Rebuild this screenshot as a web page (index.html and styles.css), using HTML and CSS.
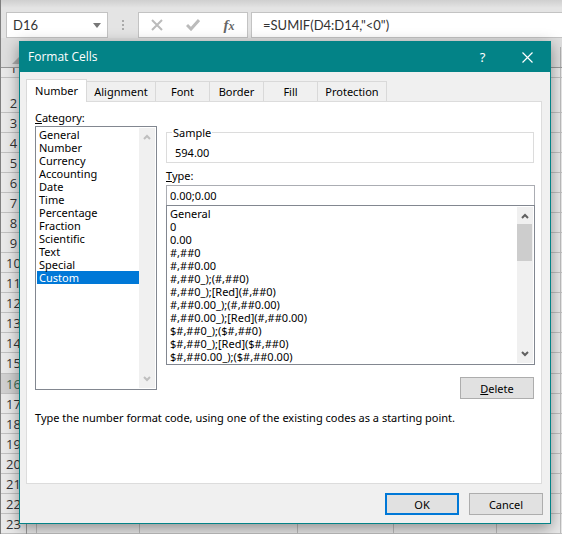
FILE: index.html
```html
<!DOCTYPE html>
<html lang="en">
<head>
<meta charset="utf-8">
<title>Format Cells</title>
<link rel="stylesheet" href="styles.css">
</head>
<body>
<main class="app">
  <header class="formula-bar">
    <div class="box name-box">
      <input class="box-input" aria-label="Name box" value="D16">
      <svg class="caret" viewBox="0 0 8 5" aria-hidden="true"><path d="M0 0h8L4 5z"/></svg>
    </div>
    <svg class="grip" viewBox="0 0 3 12" aria-hidden="true"><path d="M0 0h2v2H0zM0 4h2v2H0zM0 8h2v2H0z"/></svg>
    <div class="box tools">
      <button class="tool" aria-label="Cancel entry"><svg viewBox="0 0 14 12"><path class="tool-line" d="M2 1l10 10M12 1L2 11"/></svg></button>
      <button class="tool" aria-label="Enter"><svg viewBox="0 0 14 12"><path class="tool-line tick" d="M1 6l4 4 8-9"/></svg></button>
      <button class="tool fx" aria-label="Insert function">f<span class="fx-x">x</span></button>
    </div>
    <div class="box formula"><input class="box-input" aria-label="Formula" value="=SUMIF(D4:D14,&quot;&lt;0&quot;)"></div>
  </header>

  <div class="sheet">
    <div class="col-heads">
      <span class="corner"><svg viewBox="0 0 12 12" aria-hidden="true"><path d="M12 0v12H0z"/></svg></span>
      <span class="col-edge"></span>
    </div>
    <div class="sheet-body">
      <ol class="rows">
        <li class="row first"><span class="num">1</span></li>
        <li class="row second"><span class="num">2</span></li>
        <li class="row"><span class="num">3</span></li>
        <li class="row"><span class="num">4</span></li>
        <li class="row"><span class="num">5</span></li>
        <li class="row"><span class="num">6</span></li>
        <li class="row"><span class="num">7</span></li>
        <li class="row"><span class="num">8</span></li>
        <li class="row"><span class="num">9</span></li>
        <li class="row"><span class="num">10</span></li>
        <li class="row"><span class="num">11</span></li>
        <li class="row"><span class="num">12</span></li>
        <li class="row"><span class="num">13</span></li>
        <li class="row"><span class="num">14</span></li>
        <li class="row tall"><span class="num">15</span></li>
        <li class="row current"><span class="num">16</span></li>
        <li class="row"><span class="num">17</span></li>
        <li class="row"><span class="num">18</span></li>
        <li class="row"><span class="num">19</span></li>
        <li class="row"><span class="num">20</span></li>
        <li class="row"><span class="num">21</span></li>
        <li class="row"><span class="num">22</span></li>
        <li class="row"><span class="num">23</span></li>
      </ol>
      <div class="columns"><i></i><i></i><i></i><i></i><i></i><i></i><i></i></div>
    </div>
  </div>

  <section class="dialog" role="dialog" aria-labelledby="dialog-title">
    <div class="title-bar">
      <h1 class="title" id="dialog-title">Format Cells</h1>
      <button class="title-button" aria-label="Help">?</button>
      <button class="title-button" aria-label="Close"><svg viewBox="0 0 11 11"><path d="M.5.5l10 10M10.500.5l-10 10"/></svg></button>
    </div>
    <div class="dialog-body">
      <div class="tabs" role="tablist">
        <button class="tab active" role="tab" aria-selected="true">Number</button>
        <button class="tab wide" role="tab">Alignment</button>
        <button class="tab" role="tab">Font</button>
        <button class="tab" role="tab">Border</button>
        <button class="tab" role="tab">Fill</button>
        <button class="tab wide" role="tab">Protection</button>
      </div>
      <div class="panel" role="tabpanel">
        <div class="fields">
          <div class="category">
            <label class="label" for="category"><u>C</u>ategory:</label>
            <div class="list category-list">
              <select class="options" id="category" size="12">
                <option>General</option><option>Number</option><option>Currency</option><option>Accounting</option>
                <option>Date</option><option>Time</option><option>Percentage</option><option>Fraction</option>
                <option>Scientific</option><option>Text</option><option>Special</option><option selected>Custom</option>
              </select>
              <div class="scrollbar disabled" aria-hidden="true">
                <svg class="arrow" viewBox="0 0 8 6"><path d="M1 5l3-3 3 3"/></svg>
                <svg class="arrow" viewBox="0 0 8 6"><path d="M1 1l3 3 3-3"/></svg>
              </div>
            </div>
          </div>
          <div class="format">
            <fieldset class="sample">
              <legend class="legend">Sample</legend>
              <output class="sample-value">594.00</output>
            </fieldset>
            <label class="label" for="type"><u>T</u>ype:</label>
            <input class="type-input" id="type" value="0.00;0.00">
            <div class="list">
              <select class="options" size="12" aria-label="Format codes">
                <option>General</option><option>0</option><option>0.00</option><option>#,##0</option>
                <option>#,##0.00</option><option>#,##0_);(#,##0)</option><option>#,##0_);[Red](#,##0)</option>
                <option>#,##0.00_);(#,##0.00)</option><option>#,##0.00_);[Red](#,##0.00)</option>
                <option>$#,##0_);($#,##0)</option><option>$#,##0_);[Red]($#,##0)</option><option>$#,##0.00_);($#,##0.00)</option>
              </select>
              <div class="scrollbar" aria-hidden="true">
                <svg class="arrow" viewBox="0 0 8 6"><path d="M1 5l3-3 3 3"/></svg>
                <span class="thumb"></span>
                <svg class="arrow" viewBox="0 0 8 6"><path d="M1 1l3 3 3-3"/></svg>
              </div>
            </div>
            <button class="button delete"><span><u>D</u>elete</span></button>
          </div>
        </div>
        <p class="hint">Type the number format code, using one of the existing codes as a starting point.</p>
      </div>
      <div class="actions">
        <button class="button primary">OK</button>
        <button class="button">Cancel</button>
      </div>
    </div>
  </section>
</main>
</body>
</html>
```
FILE: styles.css
```css
* { box-sizing: border-box; }
body {
  margin: 0;
  font: 11px/13px "Noto Sans", "Open Sans", sans-serif;
  color: #000;
  background: #e6e6e6;
}
button, input, select { font: inherit; color: inherit; margin: 0; }
button, input { padding: 0; }

.app {
  position: relative;
  height: 100vh;
  overflow: hidden;
  border-left: 1px solid #808080;
  display: flex;
  flex-direction: column;
}

/* Formula bar */
.formula-bar {
  display: flex;
  flex: none;
  padding: 12px 0 0 5px;
  background: linear-gradient(#cfcfcf, #e4e4e4 8px);
}
.box {
  display: flex;
  align-items: center;
  height: 26px;
  border: 1px solid #c3c3c3;
  background: #fff;
}
.box-input {
  flex: 1;
  min-width: 0;
  border: 0;
  outline: 0;
  background: none;
  font: 13px/20px Lato, "Noto Sans", sans-serif;
  color: #333;
}
.name-box { width: 102px; padding: 0 6px; }
.caret { width: 8px; height: 5px; fill: #777; }
.grip { width: 3px; height: 12px; margin: 8px 13px 0 14px; fill: #aaa; }
.tools { width: 110px; margin-right: 3px; }
.tool { flex: 1; border: 0; background: none; height: 24px; display: grid; place-items: center; }
.tool svg { width: 14px; height: 12px; }
.tool-line { fill: none; stroke: #bbb; stroke-width: 2; }
.tick { stroke-width: 3; }
.fx { display: block; font: italic 700 15px/22px "Liberation Serif", serif; color: #666; }
.fx-x { font-size: 12px; }
.formula { flex: 1; padding-left: 11px; border-right: 0; }

/* Worksheet */
.sheet { flex: 1; display: flex; flex-direction: column; min-height: 0; }
.col-heads {
  display: flex;
  justify-content: space-between;
  align-items: flex-end;
  flex: none;
  height: 30px;
  padding-right: 1px;
  border-bottom: 1px solid #999;
  background: #dedede;
}
.corner { display: flex; justify-content: flex-end; align-items: flex-end; width: 26px; height: 27px; padding: 0 3px 3px 0; }
.corner svg { width: 12px; height: 12px; fill: #aaa; }
.col-edge { width: 1px; height: 20px; background: #b0b0b0; }
.sheet-body { display: flex; flex: 1; min-height: 0; background: #e9e9e9; }
.rows { flex: none; width: 100%; margin: 0; padding: 0; list-style: none; }
.row {
  display: flex;
  align-items: center;
  height: 20px;
  border-bottom: 1px solid #c0c0c0;
  overflow: hidden;
  font: 13px/18px "Open Sans", sans-serif;
  color: #333;
}
.num { width: 25px; text-align: center; }
.first { height: 10px; align-items: flex-end; }
.second { height: 35px; align-items: flex-end; }
.tall { height: 21px; }
.current { color: #3d6b50; background: linear-gradient(90deg, #d0d0d0 26px, transparent 26px); }
.columns { display: flex; margin-left: -100%; width: 100%; flex: none; }
.columns i { flex: none; width: 103px; border-right: 1px solid #bdbdbd; }
.columns i:nth-child(1) { width: 26px; border-color: #999; }
.columns i:nth-child(2) { width: 10px; }
.columns i:nth-child(4) { width: 158px; }
.columns i:nth-child(5) { width: 96px; }
.columns i:nth-child(7) { width: 64px; }

/* Dialog window */
.dialog {
  position: absolute;
  top: 41px;
  left: 18px;
  right: 11px;
  border: 1px solid #038387;
  background: #f0f0f0;
  box-shadow: 0 4px 14px rgba(0, 0, 0, .4);
}
.title-bar { display: flex; align-items: center; height: 30px; padding-left: 8px; background: #038387; color: #fff; }
.title { flex: 1; margin: 0; font: 12px/16px "Open Sans", sans-serif; }
.title-button { width: 45px; height: 30px; border: 0; background: none; color: #fff; font-size: 13px; display: grid; place-items: center; }
.title-button svg { width: 11px; height: 11px; fill: none; stroke: #fff; stroke-width: 1.2; }
.dialog-body { padding: 7px 8px 8px 6px; }

.tabs { display: flex; align-items: flex-end; }
.tab {
  width: 54px;
  height: 20px;
  border: 1px solid #d9d9d9;
  border-width: 1px 1px 0 0;
  background: #f0f0f0;
}
.tab.wide { width: 69px; }
.tab.active { width: 61px; height: 23px; margin-bottom: -1px; padding-bottom: 2px; border-left-width: 1px; background: #fff; position: relative; }
.panel { padding: 9px 6px 59px 8px; border: 1px solid #dcdcdc; background: #fff; }
.fields { display: flex; gap: 9px; }
.category { width: 122px; display: flex; flex-direction: column; }
.format { flex: 1; min-width: 0; display: flex; flex-direction: column; padding-top: 15px; }
.label { height: 15px; }

.list { display: flex; border: 1px solid #828790; padding: 1px; background: #fff; }
.category-list { height: 264px; }
.options {
  flex: 1;
  min-width: 0;
  height: 156px;
  padding: 0;
  border: 0;
  border-radius: 0;
  outline: 0;
  overflow: hidden;
  background: #fff;
}
.options option { display: flex; align-items: center; height: 13px; min-height: 0; padding: 0 2px; color: #000; }
.options option:checked { background: linear-gradient(#0078d7, #0078d7); -webkit-text-fill-color: #fff; }

.scrollbar { display: flex; flex-direction: column; width: 16px; padding: 6px 0; background: #f0f0f0; color: #606060; }
.arrow { width: 8px; height: 6px; margin: 0 auto; fill: none; stroke: currentColor; stroke-width: 2; }
.arrow:last-child { margin-top: auto; }
.thumb { width: 15px; height: 37px; margin-top: 5px; background: #cdcdcd; }
.disabled { color: #bfbfbf; }

.sample { margin: 0 1px 6px 0; padding: 0 8px; height: 37px; border: 1px solid #dcdcdc; min-width: 0; }
.legend { padding: 0 1px; margin-left: -3px; }
.sample-value { display: block; padding-top: 7px; }
.type-input { height: 21px; margin: 1px 0 -1px; padding: 0 3px; border: 1px solid #abadb3; border-radius: 0; outline: 0; }

.button { width: 74px; height: 22px; border: 1px solid #adadad; background: #e1e1e1; }
.primary { border: 2px solid #0078d7; }
.delete { align-self: flex-end; margin: 12px 1px 0 0; }
.hint { margin: 12px 0 0; }
.actions { display: flex; justify-content: flex-end; gap: 10px; margin-right: -1px; padding-top: 9px; }
```
